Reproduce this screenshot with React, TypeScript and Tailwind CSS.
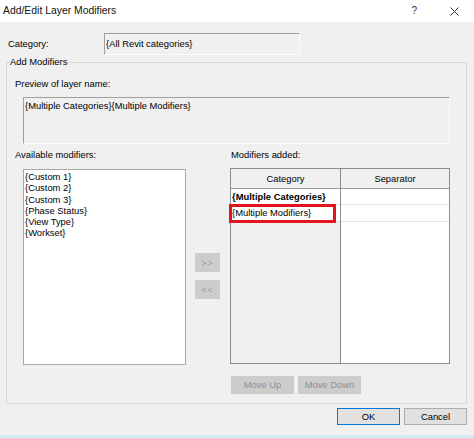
import React from "react";

const items = ["{Custom 1}", "{Custom 2}", "{Custom 3}", "{Phase Status}", "{View Type}", "{Workset}"];

export default function App() {
  return (
    <div className="w-[474px] h-[438px] bg-[#f0f0f0] flex flex-col font-['Liberation_Sans',Arial,sans-serif] text-[9.4px] leading-[12px] text-black overflow-hidden">
      {/* Title bar */}
      <div className="h-[22px] bg-white flex items-center pl-[3px] shrink-0">
        <span className="text-[10.4px] text-[#111]">Add/Edit Layer Modifiers</span>
        <span className="ml-auto mr-[33px] text-[10px] text-[#333]">?</span>
        <svg width="9" height="9" viewBox="0 0 9 9" className="mr-[15px]">
          <path d="M0.5 0.5 L8.5 8.5 M8.5 0.5 L0.5 8.5" stroke="#333" strokeWidth="1" fill="none" />
        </svg>
      </div>

      {/* Category row */}
      <div className="flex items-center h-[22px] mt-[11px] pl-[8px] shrink-0">
        <span className="w-[96px]">Category:</span>
        <div className="w-[196px] h-[22px] border-t border-l border-[#a0a0a0] border-r border-b border-r-[#fbfbfb] border-b-[#fbfbfb] pl-[1px] pt-[4px]">
          {"{All Revit categories}"}
        </div>
      </div>

      {/* Group box */}
      <fieldset className="ml-[6px] mt-[1px] w-[461px] h-[348px] border border-[#d9d9d9] shrink-0">
        <legend className="ml-[3px] leading-[12px]">Add Modifiers</legend>
        <div className="pl-[8px] flex flex-col">
          <div className="mt-[10px] h-[12px]">Preview of layer name:</div>
          <div className="mt-[7px] ml-[8px] w-[427px] h-[47px] border-t border-l border-[#a0a0a0] border-r border-b border-r-[#fbfbfb] border-b-[#fbfbfb] pl-[1px] pt-[2px]">
            {"{Multiple Categories}{Multiple Modifiers}"}
          </div>
          <div className="mt-[5px] h-[12px] flex">
            <span className="w-[216px]">Available modifiers:</span>
            <span>Modifiers added:</span>
          </div>
          <div className="mt-[7px] flex items-start">
            {/* Available list */}
            <div className="ml-[8px] mt-[1px] w-[163px] h-[196px] bg-white border border-[#a8a8a8] pl-[1px] pt-[1px] flex flex-col">
              {items.map((t) => (
                <div key={t} className="h-[11.3px] leading-[11.3px]">{t}</div>
              ))}
            </div>
            {/* Arrow buttons */}
            <div className="ml-[9px] mt-[85px] flex flex-col gap-[8px]">
              <div className="w-[25px] h-[19px] bg-[#cccccc] text-[#a0a0a0] flex items-center justify-center text-[9px] tracking-[1px]">&gt;&gt;</div>
              <div className="w-[25px] h-[19px] bg-[#cccccc] text-[#a0a0a0] flex items-center justify-center text-[9px] tracking-[1px]">&lt;&lt;</div>
            </div>
            {/* Table */}
            <div className="ml-[10px] w-[220px] h-[196px] border border-[#8c8c8c] flex">
              <div className="w-[110px] bg-[#f0f0f0] border-r border-[#8c8c8c] flex flex-col">
                <div className="h-[20px] border-b border-[#9a9a9a] flex items-center justify-center">Category</div>
                <div className="h-[16px] bg-white border-b border-[#e3e3e3] flex items-center pl-[1px] font-bold">
                  {"{Multiple Categories}"}
                </div>
                <div className="h-[17px] bg-white border-b border-[#e3e3e3] flex items-center">
                  <span className="-ml-[2px] w-[107px] h-[19px] border-[3px] border-[#e3141d] flex items-center pl-[0px]">
                    {"{Multiple Modifiers}"}
                  </span>
                </div>
              </div>
              <div className="flex-1 bg-white flex flex-col">
                <div className="h-[20px] bg-[#f0f0f0] border-b border-[#9a9a9a] flex items-center justify-center">Separator</div>
                <div className="h-[16px] border-b border-[#e3e3e3]" />
                <div className="h-[17px] border-b border-[#e3e3e3]" />
              </div>
            </div>
          </div>
          {/* Move buttons */}
          <div className="mt-[11px] ml-[216px] flex gap-[4px]">
            <div className="w-[63px] h-[18px] bg-[#cccccc] text-[#8e8e8e] flex items-center justify-center">Move Up</div>
            <div className="w-[63px] h-[18px] bg-[#cccccc] text-[#8e8e8e] flex items-center justify-center">Move Down</div>
          </div>
        </div>
      </fieldset>

      {/* Footer buttons */}
      <div className="mt-[4px] flex justify-end pr-[7px] gap-[4px] shrink-0">
        <div className="w-[63px] h-[17px] bg-[#e1e1e1] border border-[#0078d7] flex items-center justify-center">OK</div>
        <div className="w-[63px] h-[17px] bg-[#e1e1e1] border border-[#adadad] flex items-center justify-center">Cancel</div>
      </div>
      <div className="mt-auto h-[3px] bg-[#d3ecf4] shrink-0" />
    </div>
  );
}
